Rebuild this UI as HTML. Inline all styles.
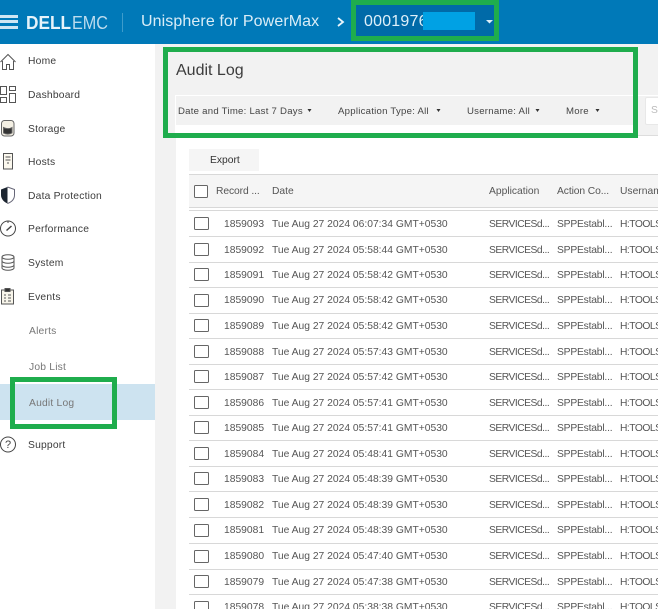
<!DOCTYPE html>
<html><head><meta charset="utf-8"><style>
html,body{margin:0;padding:0;background:#fff}
#p{position:relative;width:658px;height:609px;overflow:hidden;background:#fff;font-family:"Liberation Sans",sans-serif;color:#444}
#p div,#p span.a,#p svg{position:absolute}
.t{white-space:nowrap;font-size:10.3px;line-height:12px}
.n{left:28px;font-size:10.3px;line-height:12px;color:#3c3c3c;white-space:nowrap;letter-spacing:.2px;margin-top:2px}
.s{left:29px;font-size:10.3px;line-height:12px;color:#777;white-space:nowrap;letter-spacing:.2px;margin-top:2px}
.g{background:#1fad4d}
.ln{left:189px;width:469px;height:1px;background:#d8d8d8}
.cb{left:194px;width:13px;height:11px;border:1px solid #666;border-radius:1.5px;background:#fff}
.c1{left:224px}.c2{left:272px}.c3{left:489px;letter-spacing:-.5px!important}.c4{left:557px;letter-spacing:-.2px!important}.c5{left:620px;letter-spacing:-.5px!important}
.h{letter-spacing:0!important}
.r{color:#555;letter-spacing:0;margin-top:2px}
.f{font-size:9.6px;line-height:12px;color:#444;white-space:nowrap;letter-spacing:.25px;top:106px}
</style></head><body><div id="p">
<div style="left:0;top:0;width:658px;height:44px;background:#0079b8"></div>
<div style="left:0;top:15px;width:18px;height:3px;background:#cfe6f3"></div>
<div style="left:0;top:20px;width:18px;height:3px;background:#cfe6f3"></div>
<div style="left:0;top:26px;width:18px;height:3px;background:#cfe6f3"></div>
<svg style="left:24px;top:10px" width="90" height="24" viewBox="0 0 90 24" font-family="Liberation Sans, sans-serif"><text x="2" y="19" font-size="18" font-weight="bold" fill="#e6f3fa" textLength="45" lengthAdjust="spacingAndGlyphs">DELL</text><text x="48" y="19" font-size="18" fill="#bcdcee" textLength="36" lengthAdjust="spacingAndGlyphs">EMC</text></svg>
<div style="left:122px;top:13px;width:1px;height:19px;background:#3e9ccb"></div>
<div class="t" style="left:141px;top:12px;font-size:16px;line-height:20px;color:#d9edf7;letter-spacing:.1px">Unisphere for PowerMax</div>
<svg style="left:336px;top:16px" width="10" height="12" viewBox="0 0 10 12"><path d="M2 2l5 4-5 4" fill="none" stroke="#eaf5fb" stroke-width="1.8"/></svg>
<div style="left:351px;top:0;width:148px;height:41px;background:#006aa8"></div>
<div class="g" style="left:351px;top:0;width:148px;height:5px"></div>
<div class="g" style="left:351px;top:36px;width:148px;height:5px"></div>
<div class="g" style="left:351px;top:0;width:5px;height:41px"></div>
<div class="g" style="left:494px;top:0;width:5px;height:41px"></div>
<div class="t" style="left:364px;top:12px;font-size:16px;line-height:20px;color:#dff0f9;letter-spacing:.2px">0001976</div>
<div style="left:423px;top:12px;width:52px;height:18px;background:#00a1e4"></div>
<svg style="left:485px;top:19px" width="10" height="6" viewBox="0 0 10 6"><path d="M1 1h7L4.500 4.500z" fill="#dceef8"/></svg>

<div style="left:155px;top:44px;width:21px;height:565px;background:#f2f2f2"></div>
<div style="left:155px;top:44px;width:503px;height:91px;background:#f2f2f2"></div>
<div style="left:638px;top:135px;width:20px;height:1px;background:#ddd"></div>

<svg style="left:0;top:53px" width="18" height="18" viewBox="0 0 18 18" fill="none" stroke="#555" stroke-width="1"><path d="M.5 9L8 1.500 15.500 9M2.500 8v8.500h4v-5h3v5h4V8"/></svg>
<svg style="left:0;top:86px" width="18" height="18" viewBox="0 0 18 18" fill="none" stroke="#555" stroke-width="1"><rect x=".5" y=".5" width="6" height="8"/><rect x="9.500" y=".5" width="6" height="4"/><rect x=".5" y="11.500" width="6" height="5"/><rect x="9.500" y="7.500" width="6" height="9"/></svg>
<svg style="left:1px;top:120px" width="16" height="18" viewBox="0 0 16 18" fill="none" stroke="#666" stroke-width="1"><rect x=".5" y=".5" width="12.500" height="15.500" rx="3" fill="#f4f0e4"/><path d="M2.500 7.500c3 1.500 6 1.500 8.500 0V13c-2.500 1.500-6 1.500-8.500 0z" fill="#333"/></svg>
<svg style="left:3px;top:153px" width="12" height="18" viewBox="0 0 12 18" fill="none" stroke="#555" stroke-width="1"><rect x=".5" y=".5" width="9" height="15.500" fill="#fbf8ee"/><path d="M2.500 4h5M2.500 7h5M4 10h2"/></svg>
<svg style="left:0;top:186px" width="16" height="19" viewBox="0 0 16 19"><path d="M7.500 1L1 3.500V9c0 4 3 7 6.500 8.500z" fill="#1c2530"/><path d="M7.500 1L14.500 3.500V9c0 4-3 7-7 8.500" fill="#fff" stroke="#667" stroke-width="1"/></svg>
<svg style="left:0;top:220px" width="17" height="17" viewBox="0 0 17 17" fill="none" stroke="#444" stroke-width="1"><circle cx="8" cy="8.500" r="7.500"/><path d="M6.500 10.500L11.500 6" stroke-width="1.500"/><path d="M8 1v2"/></svg>
<svg style="left:1px;top:254px" width="15" height="17" viewBox="0 0 15 17" fill="none" stroke="#555" stroke-width="1"><ellipse cx="7" cy="3" rx="6" ry="2.300"/><path d="M1 3v11c0 1.300 3 2.300 6 2.300s6-1 6-2.300V3M1 7c0 1.300 3 2.300 6 2.300s6-1 6-2.300M1 11c0 1.300 3 2.300 6 2.300s6-1 6-2.300"/></svg>
<svg style="left:1px;top:288px" width="15" height="17" viewBox="0 0 15 17" fill="none" stroke="#555" stroke-width="1"><rect x=".5" y="2" width="12" height="14" fill="#f8f5ea"/><rect x="4" y=".5" width="5" height="3" fill="#333"/><path d="M3 7h2M7 7h3M3 10h2M7 10h3M3 13h2M7 13h3"/></svg>
<svg style="left:0;top:436px" width="17" height="17" viewBox="0 0 17 17"><circle cx="8" cy="8.500" r="7.500" fill="none" stroke="#444"/></svg>
<div class="t" style="left:5px;top:439px;font-size:11px;color:#444">?</div>

<div class="n" style="top:54px">Home</div>
<div class="n" style="top:88px">Dashboard</div>
<div class="n" style="top:122px">Storage</div>
<div class="n" style="top:155px">Hosts</div>
<div class="n" style="top:189px">Data Protection</div>
<div class="n" style="top:222px">Performance</div>
<div class="n" style="top:256px">System</div>
<div class="n" style="top:290px">Events</div>
<div class="s" style="top:324px">Alerts</div>
<div class="s" style="top:360px">Job List</div>
<div style="left:0;top:384px;width:155px;height:36px;background:#cde3f0"></div>
<div class="s" style="top:396px">Audit Log</div>
<div class="g" style="left:10px;top:377px;width:107px;height:5px"></div>
<div class="g" style="left:10px;top:424px;width:107px;height:5px"></div>
<div class="g" style="left:10px;top:377px;width:5px;height:52px"></div>
<div class="g" style="left:112px;top:377px;width:5px;height:52px"></div>
<div class="n" style="top:438px">Support</div>

<div style="left:175px;top:95px;width:483px;height:1px;background:#fff"></div>
<div style="left:175px;top:95px;width:1px;height:30px;background:#fff"></div>
<div style="left:175px;top:125px;width:458px;height:10px;background:#fff"></div>
<div style="left:645px;top:97px;width:13px;height:26px;background:#fff;border:1px solid #e8e8e8;border-radius:2px"></div>
<div class="t" style="left:651px;top:105px;color:#bbb">S</div>
<div class="t" style="left:176px;top:61px;font-size:16px;line-height:20px;color:#3d3d3d">Audit Log</div>
<div class="f" style="left:178px">Date and Time: Last 7 Days</div>
<div class="f" style="left:338px">Application Type: All</div>
<div class="f" style="left:467px">Username: All</div>
<div class="f" style="left:566px">More</div>
<svg style="left:307px;top:108px" width="6" height="5"><path d="M.5 1h4L2.500 4z" fill="#333"/></svg>
<svg style="left:436px;top:108px" width="6" height="5"><path d="M.5 1h4L2.500 4z" fill="#333"/></svg>
<svg style="left:535px;top:108px" width="6" height="5"><path d="M.5 1h4L2.500 4z" fill="#333"/></svg>
<svg style="left:595px;top:108px" width="6" height="5"><path d="M.5 1h4L2.500 4z" fill="#333"/></svg>
<div class="g" style="left:163px;top:47px;width:475px;height:5px"></div>
<div class="g" style="left:163px;top:133px;width:475px;height:5px"></div>
<div class="g" style="left:163px;top:47px;width:5px;height:91px"></div>
<div class="g" style="left:633px;top:47px;width:5px;height:91px"></div>

<div style="left:189px;top:149px;width:70px;height:22px;background:#f5f5f5"></div>
<div class="t" style="left:210px;top:155px;color:#333">Export</div>
<div style="left:189px;top:174px;width:469px;height:34px;background:#f5f5f5;border-top:1px solid #d8d8d8;border-bottom:1px solid #d8d8d8;box-sizing:border-box"></div>
<div class="ln" style="top:210px"></div>
<div class="cb" style="top:185px;width:12px"></div>
<div class="t r" style="left:216px;top:184px;letter-spacing:-.1px">Record ...</div>
<div class="t r c2" style="top:184px">Date</div>
<div class="t r c3 h" style="top:184px">Application</div>
<div class="t r c4 h" style="top:184px;letter-spacing:-.1px!important">Action Co...</div>
<div class="t r c5 h" style="top:184px">Usernam</div>

<div class="ln" style="top:236px"></div><div class="cb" style="top:217px"></div><div class="t r c1" style="top:217px">1859093</div><div class="t r c2" style="top:217px">Tue Aug 27 2024 06:07:34 GMT+0530</div><div class="t r c3" style="top:217px">SERVICESd...</div><div class="t r c4" style="top:217px">SPPEstabl...</div><div class="t r c5" style="top:217px">H:TOOLS</div>
<div class="ln" style="top:262px"></div><div class="cb" style="top:243px"></div><div class="t r c1" style="top:243px">1859092</div><div class="t r c2" style="top:243px">Tue Aug 27 2024 05:58:44 GMT+0530</div><div class="t r c3" style="top:243px">SERVICESd...</div><div class="t r c4" style="top:243px">SPPEstabl...</div><div class="t r c5" style="top:243px">H:TOOLS</div>
<div class="ln" style="top:287px"></div><div class="cb" style="top:268px"></div><div class="t r c1" style="top:268px">1859091</div><div class="t r c2" style="top:268px">Tue Aug 27 2024 05:58:42 GMT+0530</div><div class="t r c3" style="top:268px">SERVICESd...</div><div class="t r c4" style="top:268px">SPPEstabl...</div><div class="t r c5" style="top:268px">H:TOOLS</div>
<div class="ln" style="top:313px"></div><div class="cb" style="top:294px"></div><div class="t r c1" style="top:293px">1859090</div><div class="t r c2" style="top:293px">Tue Aug 27 2024 05:58:42 GMT+0530</div><div class="t r c3" style="top:293px">SERVICESd...</div><div class="t r c4" style="top:293px">SPPEstabl...</div><div class="t r c5" style="top:293px">H:TOOLS</div>
<div class="ln" style="top:338px"></div><div class="cb" style="top:319px"></div><div class="t r c1" style="top:319px">1859089</div><div class="t r c2" style="top:319px">Tue Aug 27 2024 05:58:42 GMT+0530</div><div class="t r c3" style="top:319px">SERVICESd...</div><div class="t r c4" style="top:319px">SPPEstabl...</div><div class="t r c5" style="top:319px">H:TOOLS</div>
<div class="ln" style="top:364px"></div><div class="cb" style="top:345px"></div><div class="t r c1" style="top:345px">1859088</div><div class="t r c2" style="top:345px">Tue Aug 27 2024 05:57:43 GMT+0530</div><div class="t r c3" style="top:345px">SERVICESd...</div><div class="t r c4" style="top:345px">SPPEstabl...</div><div class="t r c5" style="top:345px">H:TOOLS</div>
<div class="ln" style="top:389px"></div><div class="cb" style="top:370px"></div><div class="t r c1" style="top:370px">1859087</div><div class="t r c2" style="top:370px">Tue Aug 27 2024 05:57:42 GMT+0530</div><div class="t r c3" style="top:370px">SERVICESd...</div><div class="t r c4" style="top:370px">SPPEstabl...</div><div class="t r c5" style="top:370px">H:TOOLS</div>
<div class="ln" style="top:415px"></div><div class="cb" style="top:396px"></div><div class="t r c1" style="top:396px">1859086</div><div class="t r c2" style="top:396px">Tue Aug 27 2024 05:57:41 GMT+0530</div><div class="t r c3" style="top:396px">SERVICESd...</div><div class="t r c4" style="top:396px">SPPEstabl...</div><div class="t r c5" style="top:396px">H:TOOLS</div>
<div class="ln" style="top:440px"></div><div class="cb" style="top:421px"></div><div class="t r c1" style="top:421px">1859085</div><div class="t r c2" style="top:421px">Tue Aug 27 2024 05:57:41 GMT+0530</div><div class="t r c3" style="top:421px">SERVICESd...</div><div class="t r c4" style="top:421px">SPPEstabl...</div><div class="t r c5" style="top:421px">H:TOOLS</div>
<div class="ln" style="top:466px"></div><div class="cb" style="top:447px"></div><div class="t r c1" style="top:447px">1859084</div><div class="t r c2" style="top:447px">Tue Aug 27 2024 05:48:41 GMT+0530</div><div class="t r c3" style="top:447px">SERVICESd...</div><div class="t r c4" style="top:447px">SPPEstabl...</div><div class="t r c5" style="top:447px">H:TOOLS</div>
<div class="ln" style="top:491px"></div><div class="cb" style="top:472px"></div><div class="t r c1" style="top:472px">1859083</div><div class="t r c2" style="top:472px">Tue Aug 27 2024 05:48:39 GMT+0530</div><div class="t r c3" style="top:472px">SERVICESd...</div><div class="t r c4" style="top:472px">SPPEstabl...</div><div class="t r c5" style="top:472px">H:TOOLS</div>
<div class="ln" style="top:517px"></div><div class="cb" style="top:498px"></div><div class="t r c1" style="top:498px">1859082</div><div class="t r c2" style="top:498px">Tue Aug 27 2024 05:48:39 GMT+0530</div><div class="t r c3" style="top:498px">SERVICESd...</div><div class="t r c4" style="top:498px">SPPEstabl...</div><div class="t r c5" style="top:498px">H:TOOLS</div>
<div class="ln" style="top:543px"></div><div class="cb" style="top:524px"></div><div class="t r c1" style="top:523px">1859081</div><div class="t r c2" style="top:523px">Tue Aug 27 2024 05:48:39 GMT+0530</div><div class="t r c3" style="top:523px">SERVICESd...</div><div class="t r c4" style="top:523px">SPPEstabl...</div><div class="t r c5" style="top:523px">H:TOOLS</div>
<div class="ln" style="top:569px"></div><div class="cb" style="top:550px"></div><div class="t r c1" style="top:549px">1859080</div><div class="t r c2" style="top:549px">Tue Aug 27 2024 05:47:40 GMT+0530</div><div class="t r c3" style="top:549px">SERVICESd...</div><div class="t r c4" style="top:549px">SPPEstabl...</div><div class="t r c5" style="top:549px">H:TOOLS</div>
<div class="ln" style="top:594px"></div><div class="cb" style="top:575px"></div><div class="t r c1" style="top:575px">1859079</div><div class="t r c2" style="top:575px">Tue Aug 27 2024 05:47:38 GMT+0530</div><div class="t r c3" style="top:575px">SERVICESd...</div><div class="t r c4" style="top:575px">SPPEstabl...</div><div class="t r c5" style="top:575px">H:TOOLS</div>
<div class="cb" style="top:601px"></div><div class="t r c1" style="top:600px">1859078</div><div class="t r c2" style="top:600px">Tue Aug 27 2024 05:38:38 GMT+0530</div><div class="t r c3" style="top:600px">SERVICESd...</div><div class="t r c4" style="top:600px">SPPEstabl...</div><div class="t r c5" style="top:600px">H:TOOLS</div>
</div></body></html>
